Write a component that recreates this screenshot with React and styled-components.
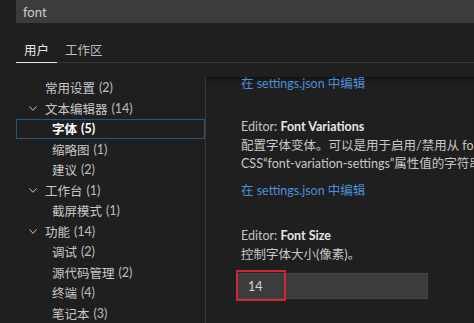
import React from "react";
import styled, { createGlobalStyle } from "styled-components";

const FONT = `Lato, "Noto Sans CJK SC", sans-serif`;

const GlobalStyle = createGlobalStyle`
  html, body { margin: 0; padding: 0; background: #1f1f1f; }
  body { font-family: ${FONT}; }
  * { box-sizing: border-box; }
`;

const Page = styled.div`
  width: 474px;
  height: 323px;
  overflow: hidden;
  background: #1f1f1f;
  padding-left: 16px;
  display: flex;
  flex-direction: column;
  font-family: ${FONT};
  font-size: 12.5px;
  color: #cccccc;
`;

const SearchBar = styled.div`
  height: 23px;
  flex: none;
  width: 600px;
  background: #3c3c3c;
  display: flex;
  align-items: center;
  padding-left: 7px;
  font-size: 13px;
  color: #cccccc;
`;

const TabRow = styled.div`
  margin-top: 12px;
  height: 28px;
  flex: none;
  display: flex;
  align-items: stretch;
  border-bottom: 1px solid #353535;
  width: 600px;
`;

const Tab = styled.div`
  padding: 0 8px;
  display: flex;
  align-items: center;
  font-size: 12.5px;
  color: ${(p) => (p.$active ? "#e7e7e7" : "#bdbdbd")};
  border-bottom: 1px solid ${(p) => (p.$active ? "#e7e7e7" : "transparent")};
  margin-bottom: -1px;
  padding-top: 1px;
`;

const Body = styled.div`
  margin-top: 14px;
  flex: 1;
  display: flex;
  min-height: 0;
`;

const Nav = styled.div`
  width: 190px;
  flex: none;
  border-right: 1px solid #3a3a3a;
  display: flex;
  flex-direction: column;
  padding-top: 0.5px;
`;

const NavRow = styled.div`
  height: 20.5px;
  flex: none;
  display: flex;
  align-items: center;
  padding-left: ${(p) => (p.$level === 2 ? 36 : 29)}px;
  outline: ${(p) => (p.$focused ? "1px solid #1f5a82" : "none")};
  outline-offset: -1px;
  white-space: nowrap;
  position: relative;
`;

const Chevron = styled.svg`
  position: absolute;
  left: 13px;
  top: 8px;
`;

const Label = styled.span`
  color: ${(p) => (p.$selected ? "#ffffff" : "#c8c8c8")};
  font-weight: ${(p) => (p.$selected ? 700 : 400)};
`;

const Count = styled.span`
  margin-left: 4px;
  color: ${(p) => (p.$selected ? "#ffffff" : "#bdbdbd")};
  font-weight: ${(p) => (p.$selected ? 700 : 400)};
`;

const Content = styled.div`
  flex: 1;
  min-width: 0;
  overflow: hidden;
  box-shadow: inset 0 5px 5px -4px #0a0a0a;
  padding-left: 35px;
`;

const ScrollInner = styled.div`
  width: 400px;
`;

const Link = styled.div`
  line-height: ${(p) => p.$lh || 18}px;
  color: #4a8fd8;
  white-space: nowrap;
  margin-top: ${(p) => p.$mt || 0}px;
`;

const SettingItem = styled.div`
  padding-top: ${(p) => p.$pt || 26}px;
`;

const Title = styled.div`
  line-height: 20px;
  white-space: nowrap;
  color: #c4c4c4;
`;

const TitleStrong = styled.span`
  font-weight: 700;
  color: #e6e6e6;
`;

const Desc = styled.div`
  line-height: 18px;
  white-space: nowrap;
  color: #c8c8c8;
`;

const InputWrap = styled.div`
  position: relative;
  margin-top: 9px;
  margin-left: -4px;
  width: 191px;
  height: 26px;
`;

const NumberInput = styled.div`
  width: 100%;
  height: 100%;
  background: #3c3c3c;
  border: 1px solid #444444;
  display: flex;
  align-items: center;
  padding-left: 10px;
  color: #d4d4d4;
  font-size: 12.5px;
`;

const Highlight = styled.div`
  position: absolute;
  left: -1px;
  top: -3px;
  width: 50px;
  height: 31px;
  border: 2px solid #d22730;
  pointer-events: none;
`;

const ChevronDown = () => (
  <Chevron width="8" height="5" viewBox="0 0 8 5">
    <polyline points="0.5,0.5 4,4.3 7.5,0.5" fill="none" stroke="#c5c5c5" strokeWidth="1" />
  </Chevron>
);

const navItems = [
  { label: "常用设置", count: 2, level: 1 },
  { label: "文本编辑器", count: 14, level: 1, chevron: true },
  { label: "字体", count: 5, level: 2, selected: true, focused: true },
  { label: "缩略图", count: 1, level: 2 },
  { label: "建议", count: 2, level: 2 },
  { label: "工作台", count: 1, level: 1, chevron: true },
  { label: "截屏模式", count: 1, level: 2 },
  { label: "功能", count: 14, level: 1, chevron: true },
  { label: "调试", count: 2, level: 2 },
  { label: "源代码管理", count: 2, level: 2 },
  { label: "终端", count: 4, level: 2 },
  { label: "笔记本", count: 3, level: 2 },
];

export default function App() {
  return (
    <>
      <GlobalStyle />
      <Page>
        <SearchBar>font</SearchBar>
        <TabRow>
          <Tab $active>用户</Tab>
          <Tab>工作区</Tab>
        </TabRow>
        <Body>
          <Nav>
            {navItems.map((it) => (
              <NavRow key={it.label} $level={it.level} $focused={it.focused}>
                {it.chevron && <ChevronDown />}
                <Label $selected={it.selected}>{it.label}</Label>
                <Count $selected={it.selected}>({it.count})</Count>
              </NavRow>
            ))}
          </Nav>
          <Content>
            <ScrollInner>
              <Link $lh={14}>在 settings.json 中编辑</Link>
              <SettingItem $pt={26}>
                <Title>
                  Editor: <TitleStrong>Font Variations</TitleStrong>
                </Title>
                <Desc>配置字体变体。可以是用于启用/禁用从 font-weight 到 font-variation-settings 的转换的布尔值，也可以是</Desc>
                <Desc>CSS“font-variation-settings”属性值的字符串。</Desc>
                <Link $mt={9}>在 settings.json 中编辑</Link>
              </SettingItem>
              <SettingItem>
                <Title>
                  Editor: <TitleStrong>Font Size</TitleStrong>
                </Title>
                <Desc>控制字体大小(像素)。</Desc>
                <InputWrap>
                  <NumberInput>14</NumberInput>
                  <Highlight />
                </InputWrap>
              </SettingItem>
            </ScrollInner>
          </Content>
        </Body>
      </Page>
    </>
  );
}
